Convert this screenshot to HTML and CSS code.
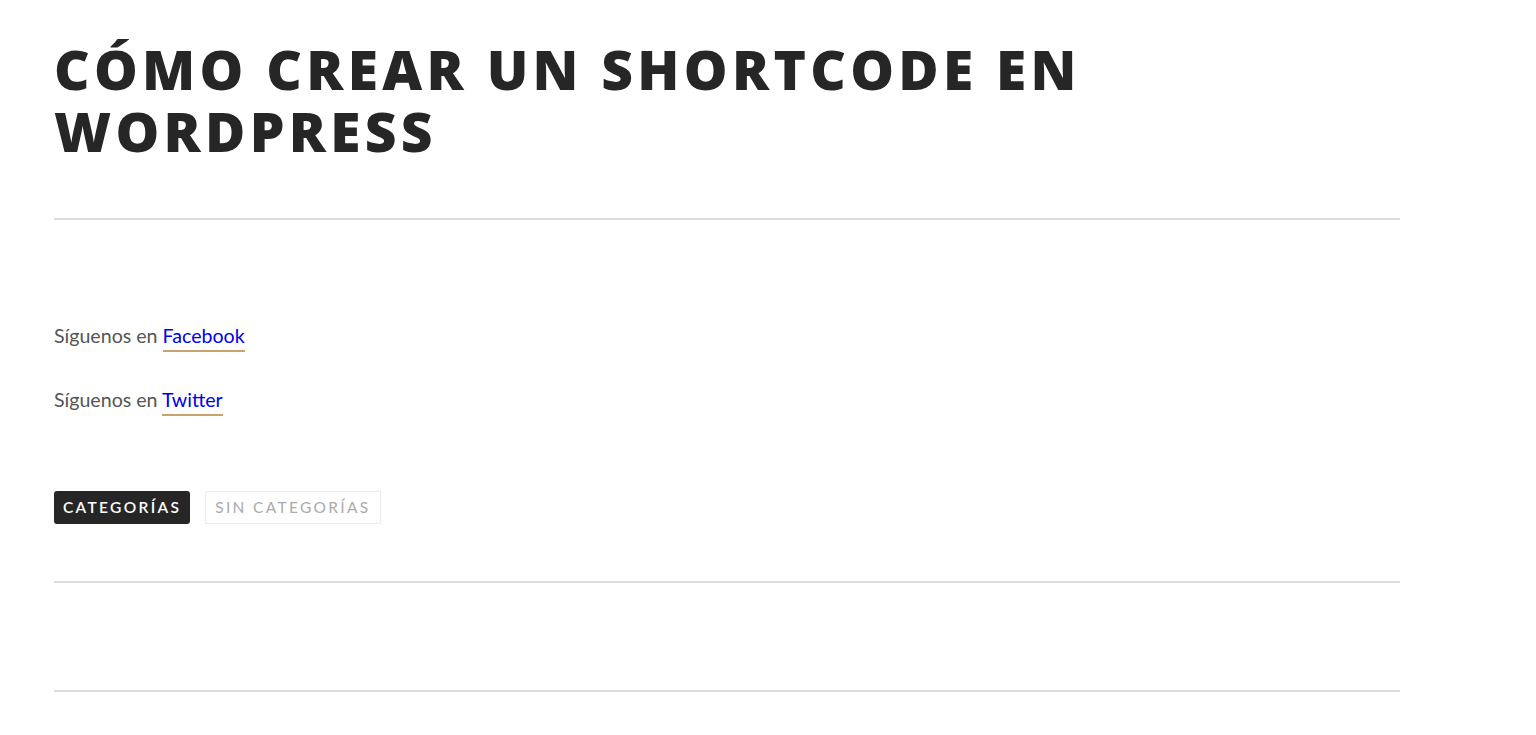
FILE: index.html
```html
<!DOCTYPE html>
<html lang="es">
<head>
  <meta charset="UTF-8">
  <meta name="viewport" content="width=device-width, initial-scale=1.0">
  <title>Cómo crear un shortcode en WordPress</title>
  <link rel="stylesheet" href="styles.css">
</head>
<body>

  <article class="post">
    <header class="post-header">
      <h1 class="post-title">Cómo crear un shortcode en WordPress</h1>
    </header>

    <hr class="divider">

    <div class="post-content">
      <p>Síguenos en <a href="#">Facebook</a></p>
      <p>Síguenos en <a href="#">Twitter</a></p>
    </div>

    <!-- etiquetas -->
    <div class="post-tags">
      <span class="tag-label">Categorías</span>
      <a class="tag" href="#">Sin categorías</a>
    </div>

    <hr class="divider">
    <div class="post-nav"></div>
    <hr class="divider">
  </article>

</body>
</html>
```

FILE: styles.css
```css
body {
  margin: 0;
  padding: 0;
  background: #fff;
  font-family: Lato, "Open Sans", sans-serif;
}

.post {
  width: 1346px;
  padding: 38px 0 0 54px;
}

/* titulo */
.post-title {
  margin: 0;
  font-family: "Open Sans", sans-serif;
  font-weight: 800;
  font-size: 55px;
  line-height: 62px;
  letter-spacing: 4.3px;
  text-transform: uppercase;
  color: #262626;
}

.divider {
  border: none;
  border-top: 2px solid #dcdcdc;
  margin: 0;
}

.post-header {
  padding-bottom: 56px;
}

/* contenido */
.post-content {
  padding-top: 104px;
  padding-bottom: 79px;
}

.post-content p {
  margin: 0 0 40px;
  font-size: 19.6px;
  line-height: 24px;
  color: #555;
}

.post-content p:last-child {
  margin-bottom: 0;
}

.post-content a {
  color: #0000ee;
  text-decoration: none;
  border-bottom: 2px solid #c9a36f;
  padding-bottom: 3px;
}

/* etiquetas */
.post-tags {
  display: flex;
  gap: 15px;
  padding-bottom: 57px;
}

.tag-label,
.tag {
  display: inline-block;
  height: 33px;
  line-height: 33px;
  padding: 0 9px;
  font-size: 15.5px;
  letter-spacing: 0.15em;
  text-transform: uppercase;
  border-radius: 3px;
  box-sizing: border-box;
}

.tag-label {
  background: #262626;
  color: #fff;
  font-weight: 600;
}

.tag {
  color: #aaa;
  border: 1px solid #ececec;
  border-radius: 0;
  text-decoration: none;
  line-height: 31px;
}

.post-nav {
  height: 107px;
}
```
